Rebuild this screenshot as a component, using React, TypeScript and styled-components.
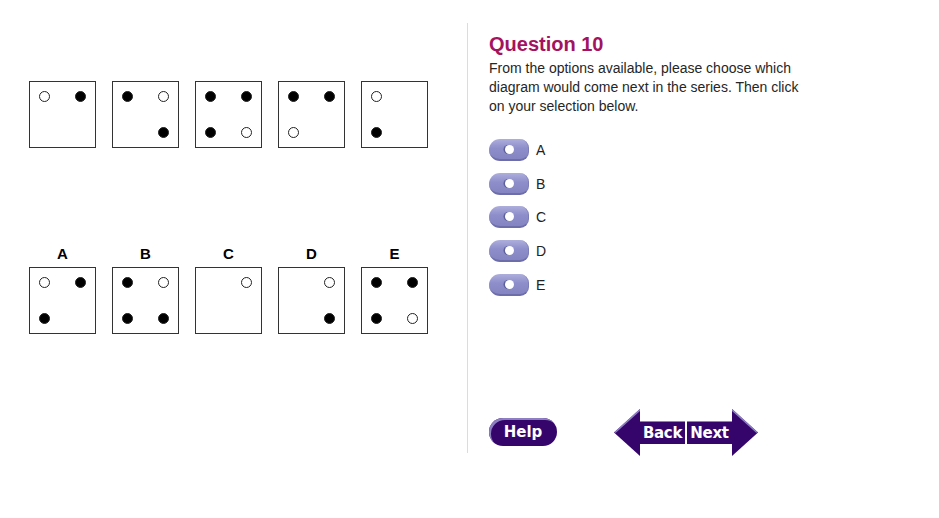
import React from 'react';
import styled, {createGlobalStyle} from 'styled-components';

type Dot = 'open' | 'filled' | null;
type Cells = [Dot, Dot, Dot, Dot];

const series: Cells[] = [
  ['open', 'filled', null, null],
  ['filled', 'open', null, 'filled'],
  ['filled', 'filled', 'filled', 'open'],
  ['filled', 'filled', 'open', null],
  ['open', null, 'filled', null],
];

const options: {label: string; cells: Cells}[] = [
  {label: 'A', cells: ['open', 'filled', 'filled', null]},
  {label: 'B', cells: ['filled', 'open', 'filled', 'filled']},
  {label: 'C', cells: [null, 'open', null, null]},
  {label: 'D', cells: [null, 'open', null, 'filled']},
  {label: 'E', cells: ['filled', 'filled', 'filled', 'open']},
];

const GlobalStyle = createGlobalStyle`
  body {
    margin: 0;
    background: #fff;
    font-family: "Liberation Sans", Arial, sans-serif;
  }
`;

const Diagram = ({cells}: {cells: Cells}) => (
  <Box>
    {cells.map((c, i) => (
      <Cell key={i}>{c && <Circle $filled={c === 'filled'}/>}</Cell>
    ))}
  </Box>
);

const RadioPill = () => (
  <Pill>
    <PillHole/>
  </Pill>
);

const ArrowHead = ({dir}: {dir: 'left' | 'right'}) => (
  <svg width="26" height="47" viewBox="0 0 26 47" style={{display: 'block', transform: dir === 'right' ? 'scaleX(-1)' : undefined}}>
    <polygon points="26,0 26,47 0,23.5" fill="#36056c"/>
    <polyline points="26,0.8 1,23.5" fill="none" stroke="#8c7fc2" strokeWidth="1.6"/>
  </svg>
);

export default function App() {
  return (
    <>
      <GlobalStyle/>
      <Page>
        <LeftPanel>
          <Row>
            {series.map((cells, i) => <Diagram key={i} cells={cells}/>)}
          </Row>
          <OptionRow>
            {options.map((o) => (
              <OptionCol key={o.label}>
                <OptionLabel>{o.label}</OptionLabel>
                <Diagram cells={o.cells}/>
              </OptionCol>
            ))}
          </OptionRow>
        </LeftPanel>
        <RightPanel>
          <Title>Question 10</Title>
          <Instructions>
            From the options available, please choose which<br/>
            diagram would come next in the series. Then click<br/>
            on your selection below.
          </Instructions>
          <Choices>
            {options.map((o) => (
              <Choice key={o.label}>
                <RadioPill/>
                <ChoiceLabel>{o.label}</ChoiceLabel>
              </Choice>
            ))}
          </Choices>
          <Footer>
            <HelpButton>Help</HelpButton>
            <NavGroup>
              <Arrow>
                <ArrowHead dir="left"/>
                <Shaft>Back</Shaft>
              </Arrow>
              <Arrow>
                <Shaft>Next</Shaft>
                <ArrowHead dir="right"/>
              </Arrow>
            </NavGroup>
          </Footer>
        </RightPanel>
      </Page>
    </>
  );
}

const Page = styled.div`
  display: flex;
  padding-top: 23px;
  width: 939px;
  height: 518px;
  box-sizing: border-box;
`;

const LeftPanel = styled.div`
  width: 467px;
  box-sizing: border-box;
  padding: 58px 0 0 29px;
`;

const Row = styled.div`
  display: flex;
  gap: 16px;
`;

const OptionRow = styled.div`
  display: flex;
  gap: 16px;
  margin-top: 98px;
`;

const OptionCol = styled.div`
  display: flex;
  flex-direction: column;
  align-items: center;
`;

const OptionLabel = styled.div`
  font-size: 15px;
  font-weight: bold;
  line-height: 16px;
  margin-bottom: 5px;
  color: #000;
`;

const Box = styled.div`
  width: 67px;
  height: 67px;
  box-sizing: border-box;
  border: 1px solid #333;
  padding: 9px;
  display: grid;
  grid-template-columns: 11px 11px;
  grid-template-rows: 11px 11px;
  justify-content: space-between;
  align-content: space-between;
`;

const Cell = styled.div`
  width: 11px;
  height: 11px;
`;

const Circle = styled.div<{$filled: boolean}>`
  width: 11px;
  height: 11px;
  box-sizing: border-box;
  border-radius: 50%;
  border: 1px solid #222;
  background: ${({$filled}) => ($filled ? '#000' : '#fff')};
`;

const RightPanel = styled.div`
  border-left: 1px solid #dcdcdc;
  height: 430px;
  padding-left: 21px;
  display: flex;
  flex-direction: column;
`;

const Title = styled.h1`
  margin: 9px 0 0;
  font-size: 20px;
  line-height: 24px;
  font-weight: bold;
  color: #a3135f;
`;

const Instructions = styled.p`
  margin: 3px 0 0;
  font-size: 14px;
  line-height: 19px;
  color: #262626;
`;

const Choices = styled.div`
  margin-top: 17px;
  display: flex;
  flex-direction: column;
`;

const Choice = styled.div`
  display: flex;
  align-items: center;
  height: 33.7px;
  gap: 7px;
`;

const Pill = styled.div`
  width: 40px;
  height: 22px;
  box-sizing: border-box;
  border-radius: 11px 9px 9px 11px;
  background: linear-gradient(#aeaedc, #8e8ecb 45%, #8484c2);
  border-bottom: 2px solid #6d6daa;
  border-right: 1px solid #7c7cb8;
  display: flex;
  align-items: center;
  justify-content: center;
`;

const PillHole = styled.div`
  width: 9px;
  height: 9px;
  border-radius: 50%;
  background: #fff;
  box-shadow: -1.5px 0 0 #5f5f9a;
  margin: 1px 0 0 2px;
`;

const ChoiceLabel = styled.span`
  font-size: 14px;
  color: #222;
`;

const Footer = styled.div`
  margin-top: auto;
  margin-bottom: -2.5px;
  display: flex;
  align-items: center;
  gap: 57px;
`;

const HelpButton = styled.button`
  width: 68px;
  height: 28px;
  border-radius: 14px;
  border: none;
  background: #36056c;
  box-shadow: inset 2px 2px 0 #8c7fc2;
  color: #fff;
  font-family: "DejaVu Sans", Verdana, sans-serif;
  font-weight: bold;
  font-size: 15px;
  padding: 0;
  cursor: pointer;
`;

const NavGroup = styled.div`
  display: flex;
  align-items: center;
  gap: 2px;
`;

const Arrow = styled.div`
  display: flex;
  align-items: center;
  cursor: pointer;
`;

const Shaft = styled.span`
  display: flex;
  align-items: center;
  justify-content: center;
  width: 45px;
  height: 22px;
  background: #36056c;
  border-top: 1px solid #8c7fc2;
  color: #fff;
  font-family: "DejaVu Sans", Verdana, sans-serif;
  font-weight: bold;
  font-size: 15px;
  letter-spacing: -0.3px;
`;
